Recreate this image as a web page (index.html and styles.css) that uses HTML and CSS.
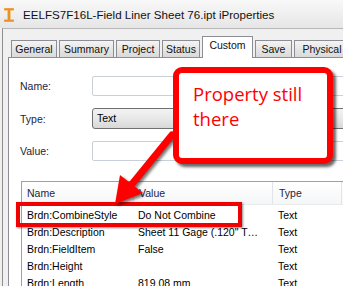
FILE: index.html
```html
<!DOCTYPE html>
<html>
<head>
<meta charset="utf-8">
<link rel="stylesheet" href="styles.css">
</head>
<body>
<div class="window">
  <div class="titlebar">
    <svg class="app-icon" width="10" height="14" viewBox="0 0 10 14">
      <path d="M0 0h10v2.5H6.5v9H10V14H0v-2.5h3.5v-9H0z" fill="#e8902c" stroke="#f6c98c" stroke-width="0.6"/>
    </svg>
    <span class="title">EELFS7F16L-Field Liner Sheet 76.ipt iProperties</span>
  </div>
  <div class="frame">
    <div class="tabs">
      <div class="tab w-general">General</div>
      <div class="tab w-summary">Summary</div>
      <div class="tab w-project">Project</div>
      <div class="tab w-status">Status</div>
      <div class="tab tab-active w-custom">Custom</div>
      <div class="tab w-save">Save</div>
      <div class="tab w-physical">Physical</div>
    </div>
    <div class="panel">
      <div class="form">
        <label class="lbl">Name:</label>
        <div class="field field-input"></div>
        <label class="lbl">Type:</label>
        <div class="field field-select">Text</div>
        <label class="lbl">Value:</label>
        <div class="field field-input"></div>
      </div>
      <div class="table">
        <div class="thead">
          <div class="th c-name">Name</div>
          <div class="th c-value">Value</div>
          <div class="th c-type">Type</div>
        </div>
        <div class="tbody">
          <div class="tr"><div class="c-name">Brdn:CombineStyle</div><div class="c-value">Do Not Combine</div><div class="c-type">Text</div></div>
          <div class="tr"><div class="c-name">Brdn:Description</div><div class="c-value">Sheet 11 Gage (.120" T…</div><div class="c-type">Text</div></div>
          <div class="tr"><div class="c-name">Brdn:FieldItem</div><div class="c-value">False</div><div class="c-type">Text</div></div>
          <div class="tr"><div class="c-name">Brdn:Height</div><div class="c-value"></div><div class="c-type">Text</div></div>
          <div class="tr"><div class="c-name">Brdn:Length</div><div class="c-value">819.08 mm</div><div class="c-type">Text</div></div>
        </div>
      </div>
    </div>
  </div>

  <div class="highlight"></div>
  <svg class="arrow" width="343" height="286" viewBox="0 0 343 286">
    <line x1="172" y1="135" x2="128" y2="189" stroke="#ff0000" stroke-width="7" stroke-linecap="round"/>
    <polygon points="115,204 120,175 143,193" fill="#ff0000"/>
  </svg>
  <div class="callout">Property still there</div>
</div>
</body>
</html>
```

FILE: styles.css
```css
* { box-sizing: border-box; margin: 0; padding: 0; }
html, body { width: 343px; height: 286px; overflow: hidden; }
body {
  background: #f0f0f0;
  font-family: "Liberation Sans", Arial, sans-serif;
  font-size: 10.5px;
  color: #000;
}
.window { position: relative; width: 343px; height: 286px; overflow: hidden; }

.titlebar {
  height: 28px;
  display: flex;
  align-items: center;
  gap: 9px;
  padding-left: 4px;
  background: linear-gradient(#f8f8f8, #e6e6e6);
}
.app-icon { flex-shrink: 0; margin-top: 1px; }
.title {
  font-size: 11.6px;
  color: #111;
  white-space: nowrap;
}

.frame {
  margin-left: 2px;
  height: 258px;
  border-left: 1px solid #8e8e8e;
  border-top: 1px solid #b8b8b8;
  background: #f0f0f0;
  padding: 7px 0 0 5px;
}

.tabs {
  height: 21px;
  display: flex;
  align-items: flex-end;
  gap: 2px;
  padding-left: 3px;
  white-space: nowrap;
}
.tab {
  flex-shrink: 0;
  height: 17px;
  border: 1px solid #8c8e94;
  border-bottom: none;
  background: linear-gradient(#f4f4f4, #e6e6e6 50%, #dadada);
  text-align: center;
  line-height: 16px;
  color: #111;
}
.tab-active {
  position: relative;
  z-index: 1;
  height: 22px;
  margin-bottom: -1px;
  background: #fff;
  line-height: 17px;
}
.w-general { width: 46px; }
.w-summary { width: 55px; }
.w-project { width: 44px; }
.w-status { width: 38px; }
.w-custom { width: 51px; }
.w-save { width: 37px; }
.w-physical { width: 56px; }

.panel {
  height: 230px;
  border-top: 1px solid #8c8e94;
  border-left: 1px solid #8c8e94;
  background: #fff;
  padding: 18px 0 0 11px;
}

.form {
  display: grid;
  grid-template-columns: 72px 270px;
  grid-template-rows: 20px 21px 20px;
  row-gap: 12px;
  align-items: center;
}
.lbl { color: #1c2540; }
.field { height: 100%; }
.field-input {
  border: 1px solid #c9d0da;
  border-radius: 2px;
}
.field-select {
  border: 1px solid #707070;
  border-radius: 3px;
  background: linear-gradient(#f3f3f3, #e8e8e8 50%, #d8d8d8);
  padding-left: 4px;
  line-height: 19px;
}

.table {
  margin: 20px 0 0 1px;
  border-top: 1px solid #a0a0a0;
  border-left: 1px solid #a0a0a0;
}
.thead {
  display: grid;
  grid-template-columns: 111px 139px 70px;
  height: 23px;
  background: linear-gradient(#ffffff, #f5f6f7);
  border-bottom: 1px solid #eaeaea;
}
.th {
  line-height: 22px;
  color: #1c2540;
}
.thead .c-value { border-left: 1px solid #e3e4e6; }
.thead .c-type { border-left: 1px solid #e3e4e6; border-right: 1px solid #e3e4e6; }
.tbody { padding-top: 2px; }
.tr {
  display: grid;
  grid-template-columns: 111px 139px 70px;
  height: 17px;
  line-height: 17px;
  white-space: nowrap;
}
.c-name { padding-left: 5px; }
.c-value { padding-left: 5px; overflow: hidden; }
.c-type { padding-left: 6px; }

.highlight {
  position: absolute;
  left: 16px;
  top: 202px;
  width: 226px;
  height: 25px;
  border: 4px solid #f00000;
  box-shadow: 1px 1px 2px rgba(0,0,0,0.45);
}
.arrow {
  position: absolute;
  left: 0;
  top: 0;
  filter: drop-shadow(2px 2px 1.5px rgba(0,0,0,0.55));
}
.callout {
  position: absolute;
  left: 173px;
  top: 67px;
  width: 160px;
  height: 97px;
  background: #fff;
  border: 6px solid #ff0000;
  border-radius: 9px;
  box-shadow: 3px 3px 3px rgba(0,0,0,0.6);
  color: #ff0000;
  font-family: "Open Sans", "Noto Sans", sans-serif;
  font-size: 18.5px;
  line-height: 25px;
  padding: 8px 6px 0 14px;
}
```
